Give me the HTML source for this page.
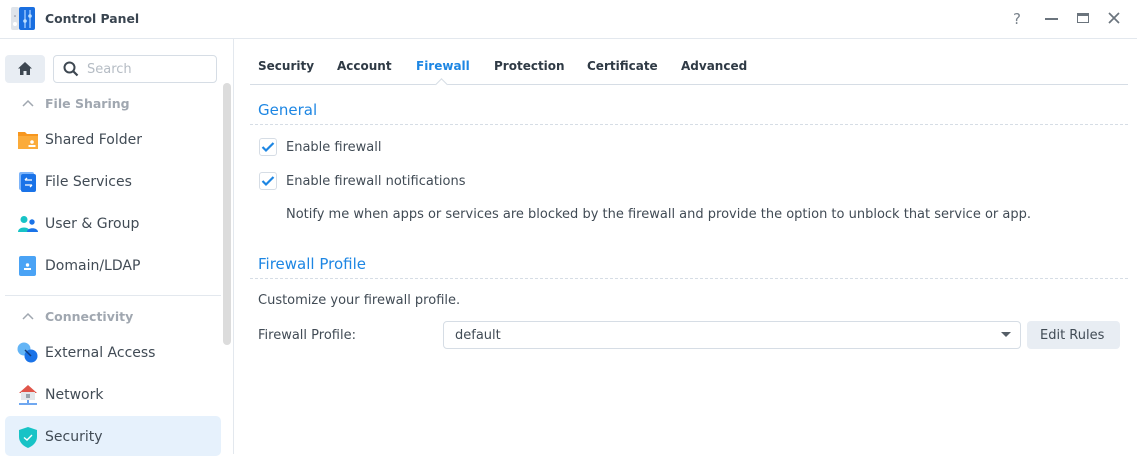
<!DOCTYPE html>
<html><head><meta charset="utf-8"><style>
*{margin:0;padding:0;box-sizing:border-box}
body{width:1137px;height:454px;overflow:hidden;background:#fff;font-family:"DejaVu Sans","Liberation Sans",sans-serif;color:#3e4a56;position:relative}
.a{position:absolute;white-space:nowrap}
.side{font-size:14px;color:#414b55}
.hdr{font-size:12.5px;font-weight:bold;color:#a0a7b0}
.tab{font-size:12px;font-weight:bold;color:#2f3a45;top:59px}
.h{font-size:15px;color:#1d86e3}
.t{font-size:13px;color:#414b55}
.dash{position:absolute;left:250px;width:878px;border-top:1px dashed #d6dde5}
.cb{position:absolute;left:259px;width:18px;height:18px;border:1px solid #d6dde5;border-radius:3px;background:#fff}
</style></head><body>
<svg class="a" style="left:10px;top:6px" width="26" height="26" viewBox="0 0 26 26">
<rect x="1" y="1" width="8" height="23" rx="2" fill="#dfe4ea"/><circle cx="5" cy="18" r="2" fill="#fff"/><circle cx="5" cy="10" r="0.8" fill="#889"/>
<rect x="9" y="1" width="16" height="23" rx="2" fill="#1a6fe0"/>
<line x1="15" y1="4" x2="15" y2="22" stroke="#9cc8ff" stroke-width="1.4"/><line x1="20" y1="4" x2="20" y2="22" stroke="#9cc8ff" stroke-width="1.4"/>
<circle cx="15" cy="15" r="1.8" fill="#bfe0ff"/><circle cx="20" cy="10" r="1.8" fill="#bfe0ff"/></svg>
<div class="a" style="left:45px;top:11px;font-size:12.4px;font-weight:bold;color:#3a4550">Control Panel</div>
<div class="a" style="left:1013px;top:10px;font-size:15px;color:#7a838c">?</div>
<div class="a" style="left:1045px;top:18px;width:13px;height:2px;background:#6b747d"></div>
<div class="a" style="left:1077px;top:13px;width:12px;height:10px;border:1.5px solid #6b747d;border-top-width:3px"></div>
<svg class="a" style="left:1108px;top:12px" width="12" height="12"><path d="M1 1L11 11M11 1L1 11" stroke="#6b747d" stroke-width="1.7"/></svg>
<div class="a" style="left:0;top:38px;width:1137px;height:1px;background:#e3e8ee"></div>
<div class="a" style="left:233px;top:39px;width:1px;height:415px;background:#e3e8ee"></div>
<div class="a" style="left:5px;top:55px;width:40px;height:28px;background:#e8edf3;border-radius:4px"></div>
<svg class="a" style="left:17px;top:61px" width="16" height="15" viewBox="0 0 16 15"><path d="M8 1L1 7.5H3V14H6.5V10H9.5V14H13V7.5H15Z" fill="#3d4751"/></svg>
<div class="a" style="left:53px;top:55px;width:164px;height:28px;border:1px solid #d6dde5;border-radius:4px"></div>
<svg class="a" style="left:63px;top:61px" width="16" height="16"><circle cx="6.5" cy="6.5" r="5" fill="none" stroke="#3d4751" stroke-width="2"/><path d="M10 10L14.5 14.5" stroke="#3d4751" stroke-width="2.2"/></svg>
<div class="a" style="left:87px;top:62px;font-size:13px;color:#b5bcc4">Search</div>
<div class="a" style="left:223px;top:83px;width:8px;height:262px;background:#dcdcdc;border-radius:4px"></div>
<svg class="a" style="left:22px;top:99px" width="12" height="8"><path d="M1 7L6 2L11 7" fill="none" stroke="#a0a7b0" stroke-width="1.5"/></svg>
<div class="a hdr" style="left:45px;top:96px">File Sharing</div>
<svg class="a" style="left:18px;top:130px" width="20" height="20"><path d="M0 2H7L9 4H20V19H0Z" fill="#f7961e"/><path d="M0 6H20V19H0Z" fill="#fbab3a"/><circle cx="14" cy="12" r="1.8" fill="#fff"/><rect x="10.5" y="15" width="7" height="2" fill="#fff"/></svg>
<div class="a side" style="left:45px;top:132px">Shared Folder</div>
<svg class="a" style="left:19px;top:172px" width="18" height="20"><rect x="0" y="0" width="15" height="18" rx="2" fill="#7db4f9"/><rect x="2" y="2" width="15" height="18" rx="2" fill="#1a73e8"/><path d="M6 8H13M6 8L8 6M13 13H6M13 13L11 15" stroke="#fff" stroke-width="1.3" fill="none"/></svg>
<div class="a side" style="left:45px;top:174px">File Services</div>
<svg class="a" style="left:18px;top:215px" width="20" height="18"><circle cx="6" cy="4.5" r="3.5" fill="#18c3c6"/><path d="M0 17C0 11 12 11 12 17Z" fill="#18c3c6"/><circle cx="14" cy="7" r="2.7" fill="#1a73e8"/><path d="M9 17C9 12 20 12 20 17Z" fill="#1a73e8"/></svg>
<div class="a side" style="left:45px;top:216px">User &amp; Group</div>
<svg class="a" style="left:19px;top:256px" width="17" height="20"><rect x="0" y="0" width="17" height="20" rx="2" fill="#4aa3f5"/><circle cx="8.5" cy="9" r="1.7" fill="#fff"/><rect x="5" y="12" width="7" height="2" fill="#fff"/></svg>
<div class="a side" style="left:45px;top:258px">Domain/LDAP</div>
<div class="a" style="left:5px;top:295px;width:216px;height:1px;background:#e3e8ee"></div>
<svg class="a" style="left:22px;top:312px" width="12" height="8"><path d="M1 7L6 2L11 7" fill="none" stroke="#a0a7b0" stroke-width="1.5"/></svg>
<div class="a hdr" style="left:45px;top:309px">Connectivity</div>
<svg class="a" style="left:17px;top:342px" width="22" height="22"><circle cx="7" cy="7" r="6.5" fill="#64b5f6"/><circle cx="14" cy="14" r="6.5" fill="#1a73e8"/><path d="M8 8L14 14" stroke="#103a7a" stroke-width="1.5"/></svg>
<div class="a side" style="left:45px;top:345px">External Access</div>
<svg class="a" style="left:18px;top:384px" width="20" height="22"><path d="M10 1L1 9H19Z" fill="#e0554a"/><rect x="3" y="8" width="14" height="8" fill="#e4e7eb"/><rect x="8" y="10" width="4" height="4" fill="#9aa3ab"/><path d="M10 16V19M1 20H19" stroke="#1a73e8" stroke-width="1.3"/></svg>
<div class="a side" style="left:45px;top:387px">Network</div>
<div class="a" style="left:5px;top:416px;width:216px;height:40px;background:#e6f1fc;border-radius:5px"></div>
<svg class="a" style="left:18px;top:427px" width="20" height="21"><path d="M10 0L19 3V10C19 15 15 19 10 21C5 19 1 15 1 10V3Z" fill="#18c3c6"/><path d="M6 10.5L9 13L14 8" stroke="#fff" stroke-width="1.4" fill="none"/></svg>
<div class="a side" style="left:45px;top:429px">Security</div>
<div class="a tab" style="left:258px">Security</div>
<div class="a tab" style="left:337px">Account</div>
<div class="a tab" style="left:416px;color:#1d86e3">Firewall</div>
<div class="a tab" style="left:494px">Protection</div>
<div class="a tab" style="left:587px">Certificate</div>
<div class="a tab" style="left:681px">Advanced</div>
<div class="a" style="left:250px;top:84px;width:878px;height:1px;background:#d6dde5"></div>
<div class="a" style="left:437px;top:80px;width:9px;height:9px;background:#fff;border-left:1px solid #d6dde5;border-top:1px solid #d6dde5;transform:rotate(45deg)"></div>
<div class="a h" style="left:258px;top:101px">General</div>
<div class="dash" style="top:124px"></div>
<div class="cb" style="top:138px"></div>
<svg class="a" style="left:261px;top:141px" width="14" height="12"><path d="M1.5 6L5 9.5L12.5 2" stroke="#1d86e3" stroke-width="2.2" fill="none"/></svg>
<div class="a t" style="left:286px;top:140px">Enable firewall</div>
<div class="cb" style="top:172px"></div>
<svg class="a" style="left:261px;top:175px" width="14" height="12"><path d="M1.5 6L5 9.5L12.5 2" stroke="#1d86e3" stroke-width="2.2" fill="none"/></svg>
<div class="a t" style="left:286px;top:174px">Enable firewall notifications</div>
<div class="a t" style="left:286px;top:207px">Notify me when apps or services are blocked by the firewall and provide the option to unblock that service or app.</div>
<div class="a h" style="left:258px;top:255px">Firewall Profile</div>
<div class="dash" style="top:278px"></div>
<div class="a t" style="left:258px;top:293px">Customize your firewall profile.</div>
<div class="a t" style="left:258px;top:328px">Firewall Profile:</div>
<div class="a" style="left:443px;top:321px;width:578px;height:28px;border:1px solid #d6dde5;border-radius:4px"></div>
<div class="a t" style="left:455px;top:328px">default</div>
<svg class="a" style="left:1001px;top:332px" width="10" height="6"><path d="M0 0H10L5 5Z" fill="#555e67"/></svg>
<div class="a" style="left:1027px;top:321px;width:93px;height:28px;background:#e8edf3;border-radius:4px"></div>
<div class="a t" style="left:1040px;top:328px">Edit Rules</div>
</body></html>
